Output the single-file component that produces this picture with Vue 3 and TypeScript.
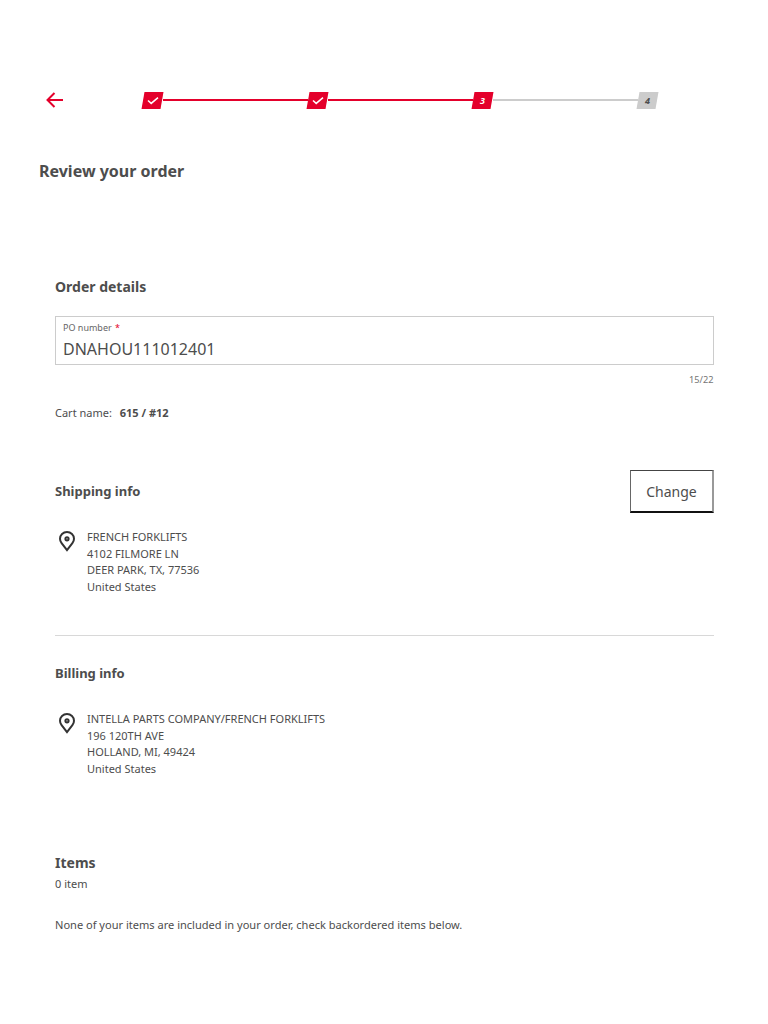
<script setup lang="ts">
interface Step { label: string; state: 'done' | 'active' | 'todo' }
const steps: Step[] = [
  { label: '', state: 'done' },
  { label: '', state: 'done' },
  { label: '3', state: 'active' },
  { label: '4', state: 'todo' },
]
const shipping = ['FRENCH FORKLIFTS', '4102 FILMORE LN', 'DEER PARK, TX, 77536', 'United States']
const billing = ['INTELLA PARTS COMPANY/FRENCH FORKLIFTS', '196 120TH AVE', 'HOLLAND, MI, 49424', 'United States']
</script>

<template>
  <main class="page">
    <header class="top">
      <button class="back" aria-label="Back">
        <svg width="20" height="18" viewBox="0 0 20 18" fill="none" stroke="#e4002b" stroke-width="2">
          <path d="M18 9H2M9.5 2 2.5 9l7 7" />
        </svg>
      </button>
      <ol class="stepper">
        <template v-for="(s, i) in steps" :key="i">
          <li class="step" :class="s.state">
            <span class="step-inner">
              <svg v-if="s.state === 'done'" width="12" height="9" viewBox="0 0 12 9" fill="none" stroke="#fff" stroke-width="1.5">
                <path d="M1 4.5 4.2 7.4 11 1.6" />
              </svg>
              <template v-else>{{ s.label }}</template>
            </span>
          </li>
          <li v-if="i < steps.length - 1" class="line" :class="{ on: i < 2 }"></li>
        </template>
      </ol>
    </header>

    <h1 class="title">Review your order</h1>

    <div class="content">
      <h2 class="head first">Order details</h2>
      <div class="field">
        <div class="field-label">PO number <span class="req">*</span></div>
        <div class="field-value">DNAHOU111012401</div>
      </div>
      <div class="counter">15/22</div>
      <p class="cart">Cart name: <b>615 / #12</b></p>

      <div class="ship-head">
        <h2 class="head small ship-title">Shipping info</h2>
        <button class="change">Change</button>
      </div>
      <div class="address">
        <svg class="pin" width="24" height="24" viewBox="0 0 24 24" fill="none" stroke="#333" stroke-width="2">
          <path d="M12 22.2 6.6 15.2C5.4 13.7 5 12.4 5 10.8 5 6.9 8.1 4 12 4s7 2.9 7 6.8c0 1.6-.4 2.9-1.6 4.4Z" />
          <circle cx="12" cy="10.8" r="1.6" />
        </svg>
        <div><div v-for="l in shipping" :key="l">{{ l }}</div></div>
      </div>
      <hr class="rule" />

      <h2 class="head small billing">Billing info</h2>
      <div class="address billing-address">
        <svg class="pin" width="24" height="24" viewBox="0 0 24 24" fill="none" stroke="#333" stroke-width="2">
          <path d="M12 22.2 6.6 15.2C5.4 13.7 5 12.4 5 10.8 5 6.9 8.1 4 12 4s7 2.9 7 6.8c0 1.6-.4 2.9-1.6 4.4Z" />
          <circle cx="12" cy="10.8" r="1.6" />
        </svg>
        <div><div v-for="l in billing" :key="l">{{ l }}</div></div>
      </div>

      <h2 class="items">Items</h2>
      <p class="count">0 item</p>
      <p class="none">None of your items are included in your order, check backordered items below.</p>
    </div>
  </main>
</template>

<style>
html, body { margin: 0; background: #fff; }
</style>

<style scoped>
.page {
  font-family: "Noto Sans", sans-serif;
  color: #4d4d4d;
  font-size: 11px;
  height: 1024px;
  overflow: hidden;
  box-sizing: border-box;
  padding-top: 91px;
}
.top { display: flex; align-items: center; height: 18px; padding-left: 45px; }
.back { all: unset; display: flex; width: 20px; height: 18px; margin-right: 77.5px; }
.stepper { list-style: none; display: flex; align-items: center; margin: 0; padding: 0; width: 515px; }
.step {
  width: 19px; height: 17px; margin: 0 0.5px;
  transform: skewX(-10deg);
  display: flex; align-items: center; justify-content: center;
  flex: none;
}
.step-inner {
  transform: skewX(10deg);
  display: flex; align-items: center; justify-content: center;
  font-size: 9px; font-weight: 700; font-style: italic; line-height: 1;
}
.step.done, .step.active { background: #e4002b; color: #fff; }
.step.todo { background: #ccc; color: #4d4d4d; }
.line { flex: 1; height: 2px; background: #ccc; }
.line.on { background: #e4002b; }

.title { margin: 51px 0 0 39px; font-size: 16px; line-height: 22px; font-weight: 700; }
.content { margin: 0 54px 0 55px; }
.head { margin: 0; font-size: 14px; line-height: 20px; font-weight: 700; }
.head.small { font-size: 13px; }
.head.first { margin-top: 95px; }

.field {
  margin-top: 19px;
  height: 49px;
  box-sizing: border-box;
  border: 1px solid #ccc;
  padding: 4px 7px 0;
}
.field-label { font-size: 9px; line-height: 14px; color: #666; }
.req { color: #e4002b; margin-left: 1px; }
.field-value { font-size: 16px; line-height: 22px; margin-top: 3px; }
.counter { margin-top: 8px; padding-right: 0.5px; text-align: right; font-size: 9.2px; line-height: 14px; color: #757575; }
.cart { margin: 18px 0 0; line-height: 16px; }
.cart b { margin-left: 5px; font-weight: 700; }

.ship-head { margin-top: 49px; display: flex; justify-content: space-between; align-items: center; }
.ship-title { margin-bottom: 2px; }
.change {
  all: unset;
  box-sizing: border-box;
  width: 84px; height: 43px;
  border: 1px solid #444;
  border-left-color: #666;
  border-right: 2px solid #999;
  border-bottom: 2px solid #111;
  display: flex; align-items: center; justify-content: center;
  font-size: 14px;
  color: #4d4d4d;
}
.address { display: flex; line-height: 16.5px; margin-top: 16px; }
.pin { flex: none; margin: -1px 8px 0 0; }
.rule { margin: 40px 0 0; border: 0; border-top: 1px solid #d8d8d8; }
.billing { margin-top: 27px; }
.billing-address { margin-top: 28px; }
.items { margin: 76px 0 0; font-size: 14px; line-height: 20px; font-weight: 700; }
.count { margin: 3px 0 0; line-height: 16px; }
.none { margin: 25px 0 0; line-height: 16px; font-size: 11.05px; }
</style>
